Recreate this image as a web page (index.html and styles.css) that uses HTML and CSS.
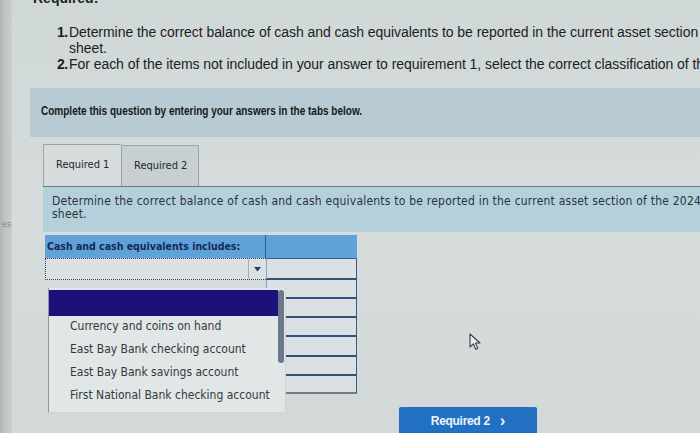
FILE: index.html
```html
<!DOCTYPE html>
<html>
<head>
<meta charset="utf-8">
<link rel="stylesheet" href="styles.css">
</head>
<body>
<div class="screen">
  <div class="gutter"><div class="gutter-text">es</div></div>
  <div class="page">
    <div class="req-title">Required:</div>
    <ol class="reqs">
      <li><span class="num">1.</span><span class="txt">Determine the correct balance of cash and cash equivalents to be reported in the current asset section of the balance<br>sheet.</span></li>
      <li><span class="num">2.</span><span class="txt">For each of the items not included in your answer to requirement 1, select the correct classification of the item.</span></li>
    </ol>
    <div class="instr"><span class="instr-text">Complete this question by entering your answers in the tabs below.</span></div>
    <div class="tabs">
      <div class="tab active">Required 1</div>
      <div class="tab">Required 2</div>
    </div>
    <div class="panel">Determine the correct balance of cash and cash equivalents to be reported in the current asset section of the 2024 balance<br>sheet.</div>
    <div class="grid-wrap">
      <div class="grid">
        <div class="hd hd-left">Cash and cash equivalents includes:</div>
        <div class="hd hd-right"></div>
        <div class="c1 sel"><span class="arrowbox"><svg width="7" height="5" viewBox="0 0 7 5"><path d="M0 0 L7 0 L3.5 4.5 Z" fill="#2b3f6a"/></svg></span></div>
        <div class="c2 first"></div>
        <div class="c1"></div><div class="c2"></div>
        <div class="c1"></div><div class="c2"></div>
        <div class="c1"></div><div class="c2"></div>
        <div class="c1"></div><div class="c2"></div>
        <div class="c1"></div><div class="c2"></div>
        <div class="c1"></div><div class="c2 last"></div>
      </div>
      <div class="dropdown">
        <div class="opt hl"></div>
        <div class="opt">Currency and coins on hand</div>
        <div class="opt">East Bay Bank checking account</div>
        <div class="opt">East Bay Bank savings account</div>
        <div class="opt">First National Bank checking account</div>
        <div class="scroll"></div>
      </div>
    </div>
    <div class="actions">
      <button class="next">Required 2 <span class="chev">&#x203A;</span></button>
    </div>
  </div>
  <svg class="cursor" width="12" height="18" viewBox="0 0 12 18"><path d="M1 1 L1 14 L4.3 10.8 L6.6 16.3 L8.8 15.4 L6.5 10 L11 10 Z" fill="#e8ecec" stroke="#3a3f44" stroke-width="1.1" stroke-linejoin="round"/></svg>
</div>
</body>
</html>
```

FILE: styles.css
```css
html, body {
  margin: 0;
  padding: 0;
}
body {
  width: 700px;
  height: 433px;
  overflow: hidden;
  background: #d4dadb;
  font-family: "Liberation Sans", Arial, sans-serif;
  color: #1b1d1f;
}
.screen {
  position: relative;
  display: flex;
  width: 700px;
  height: 433px;
  overflow: hidden;
  background: linear-gradient(180deg, #d0d7d7 0%, #d6dcdc 50%, #d3d9d9 100%);
}
.gutter {
  width: 12px;
  flex: none;
  background: linear-gradient(90deg, #aeb5b4 0px, #bcc3c2 4px, #c9cfcf 12px);
  overflow: hidden;
}
.gutter-text {
  margin-top: 219px;
  text-align: right;
  font-family: "DejaVu Sans Condensed", "DejaVu Sans", sans-serif;
  font-size: 9px;
  color: #7d8587;
  padding-right: 1px;
}
.page {
  flex: 1;
  min-width: 0;
  display: flex;
  flex-direction: column;
  align-items: flex-start;
}
.page > * {
  flex-shrink: 0;
}
.req-title {
  margin-top: -10px;
  margin-left: 21px;
  font-weight: bold;
  font-size: 14px;
  line-height: 16px;
  color: #222;
}
.reqs {
  list-style: none;
  margin: 18px 0 0 45px;
  padding: 0;
  font-size: 14px;
  line-height: 16px;
  color: #1d2023;
  white-space: nowrap;
}
.reqs li {
  display: flex;
}
.reqs .num {
  width: 12px;
  flex: none;
  font-weight: bold;
  letter-spacing: -0.5px;
}
.reqs .txt {
  letter-spacing: -0.05px;
}
.instr {
  margin: 16px 0 0 18px;
  align-self: stretch;
  height: 49px;
  box-sizing: border-box;
  padding: 14px 0 0 11px;
  background: #b8cad3;
  font-weight: bold;
  font-size: 13px;
  line-height: 17px;
  color: #15181b;
  white-space: nowrap;
}
.instr-text {
  display: inline-block;
  transform: scaleX(0.77);
  transform-origin: left center;
}
.tabs {
  margin: 7px 0 0 31px;
  display: flex;
  align-items: flex-end;
  height: 42px;
}
.tab {
  width: 78px;
  height: 41px;
  box-sizing: border-box;
  padding: 13px 0 0 12px;
  border: 1px solid #9ba4a6;
  border-bottom: none;
  background: #c8cfd0;
  font-family: "DejaVu Sans Condensed", "DejaVu Sans", sans-serif;
  font-size: 11px;
  line-height: 14px;
  color: #23282c;
}
.tab.active {
  height: 42px;
  background: #d6dcdc;
  border-right: none;
}
.panel {
  align-self: stretch;
  margin-left: 31px;
  border-top: 1px solid #6e787c;
  background: #b4d1db;
  padding: 8px 0 11px 9px;
  font-family: "DejaVu Sans Condensed", "DejaVu Sans", sans-serif;
  font-size: 12px;
  letter-spacing: 0.22px;
  line-height: 13px;
  color: #2d3338;
  white-space: nowrap;
}
.grid-wrap {
  position: relative;
  margin: 3px 0 0 33px;
}
.grid {
  display: grid;
  grid-template-columns: 221px 91px;
  grid-template-rows: 23px 22px 19px 19px 19px 20px 19px 18px;
}
.hd {
  background: #5ea2d9;
}
.hd-left {
  border-right: 1px solid #2f5f92;
  padding-left: 2px;
  font-family: "DejaVu Sans Condensed", "DejaVu Sans", sans-serif;
  font-weight: bold;
  font-size: 10.5px;
  line-height: 22px;
  color: #172857;
  white-space: nowrap;
}
.c1.sel {
  background: #dbe1e2;
  border-top: 1px dotted #39424a;
  border-bottom: 1px dotted #39424a;
  border-left: 1px dotted #39424a;
  display: flex;
  justify-content: flex-end;
}
.arrowbox {
  width: 17px;
  border-left: 1px solid #a7aeb0;
  display: flex;
  align-items: center;
  justify-content: center;
}
.c2 {
  background: #dbe1e2;
  border-bottom: 2px solid #34517d;
  border-right: 1px solid #3b5a8a;
  border-left: 1px solid #8da0b8;
}
.c2.first {
  border-top: 1px solid #3b5a8a;
}
.c2.last {
  border-bottom-color: #6f7c88;
}
.dropdown {
  position: absolute;
  left: 3px;
  top: 53px;
  width: 238px;
  height: 125px;
  box-sizing: border-box;
  padding-top: 2px;
  background: #e1e6e6;
  border-left: 1px solid #8f979a;
  border-right: 1px solid #cfd5d6;
  border-bottom: 1px solid #cfd5d6;
  font-family: "DejaVu Sans Condensed", "DejaVu Sans", sans-serif;
  font-size: 12px;
  color: #35393d;
}
.opt {
  height: 23px;
  line-height: 23px;
  padding-left: 21px;
  white-space: nowrap;
}
.opt.hl {
  box-sizing: border-box;
  height: 26px;
  width: 229px;
  margin-bottom: -1px;
  background: #1c107a;
}
.scroll {
  position: absolute;
  right: 1px;
  top: 2px;
  width: 6px;
  height: 73px;
  border-radius: 3px;
  background: #6b778a;
}
.actions {
  margin: 13px 0 0 387px;
}
.next {
  width: 138px;
  height: 30px;
  border: none;
  border-radius: 2px;
  background: #2270c2;
  color: #eef3fa;
  font-family: "Liberation Sans", Arial, sans-serif;
  font-weight: bold;
  font-size: 12px;
  letter-spacing: -0.3px;
  padding: 0 0 2px 0;
  display: flex;
  align-items: center;
  justify-content: center;
  gap: 10px;
}
.chev {
  font-size: 17px;
  line-height: 12px;
}
.cursor {
  position: absolute;
  left: 469px;
  top: 333px;
}
```
